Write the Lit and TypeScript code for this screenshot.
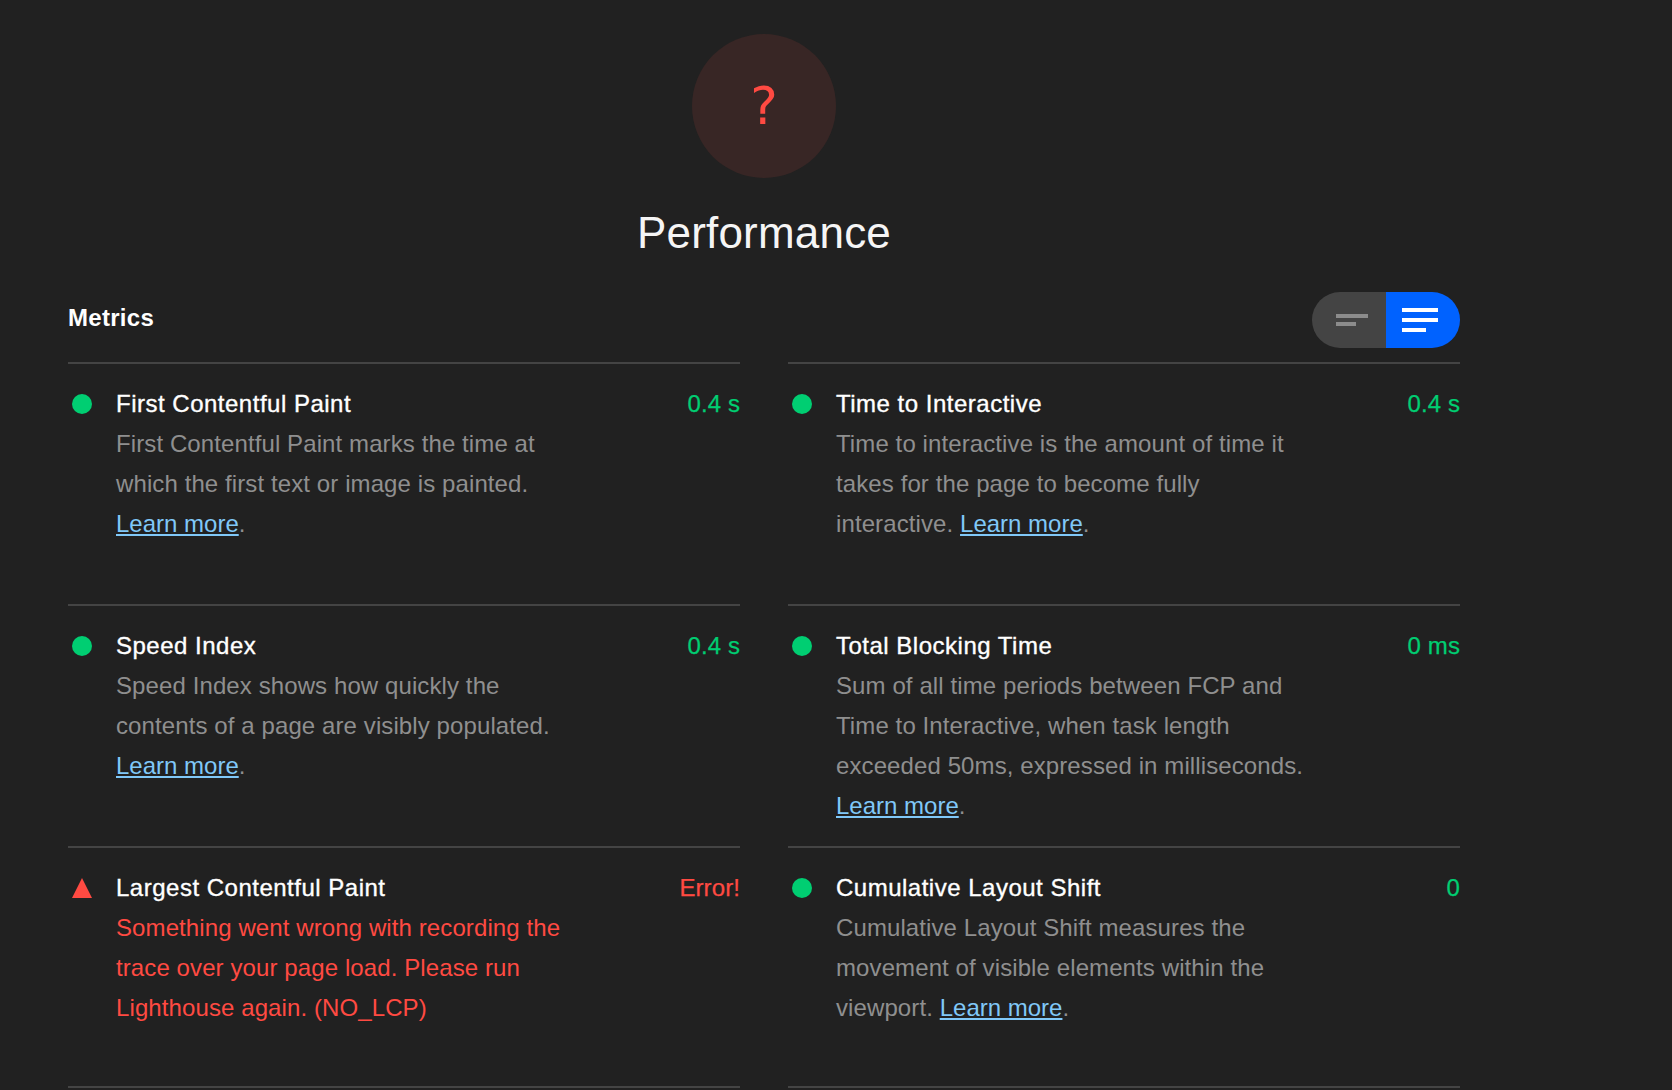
import { html, css, LitElement, nothing } from 'lit';
import { customElement } from 'lit/decorators.js';

type Metric = {
    title: string;
    value: string;
    text: string;
    link?: boolean;
    error?: boolean;
};

const metrics: Metric[] = [
    { title: 'First Contentful Paint', value: '0.4 s', text: 'First Contentful Paint marks the time at which the first text or image is painted. ', link: true },
    { title: 'Time to Interactive', value: '0.4 s', text: 'Time to interactive is the amount of time it takes for the page to become fully interactive. ', link: true },
    { title: 'Speed Index', value: '0.4 s', text: 'Speed Index shows how quickly the contents of a page are visibly populated. ', link: true },
    { title: 'Total Blocking Time', value: '0 ms', text: 'Sum of all time periods between FCP and Time to Interactive, when task length exceeded 50ms, expressed in milliseconds. ', link: true },
    { title: 'Largest Contentful Paint', value: 'Error!', text: 'Something went wrong with recording the trace over your page load. Please run Lighthouse again. (NO_LCP)', error: true },
    { title: 'Cumulative Layout Shift', value: '0', text: 'Cumulative Layout Shift measures the movement of visible elements within the viewport. ', link: true },
];

@customElement('app-root')
export class AppRoot extends LitElement {
    static styles = css`
        :host {
            display: block;
            height: 1090px;
            overflow: hidden;
            background: #212121;
            font-family: 'Liberation Sans', Arial, sans-serif;
            font-size: 24px;
            line-height: 40px;
            color: #fff;
        }
        .page {
            width: 1392px;
            padding: 34px 0 0 68px;
        }
        .gauge {
            display: flex;
            flex-direction: column;
            align-items: center;
        }
        .circle {
            width: 144px;
            height: 144px;
            border-radius: 50%;
            background: #382625;
            color: #ff4a42;
            display: flex;
            align-items: center;
            justify-content: center;
            font-family: 'DejaVu Sans', sans-serif;
            font-size: 52px;
            line-height: 1;
        }
        .label {
            margin-top: 27px;
            font-size: 44px;
            line-height: 56px;
            letter-spacing: 0.2px;
            color: #f5f5f5;
        }
        .header {
            margin-top: 31px;
            height: 70px;
            display: flex;
            justify-content: space-between;
            align-items: flex-start;
        }
        .heading {
            font-weight: bold;
            line-height: 52px;
            letter-spacing: 0.3px;
        }
        .toggle {
            display: flex;
            height: 56px;
            width: 148px;
            border-radius: 28px;
            overflow: hidden;
        }
        .toggle .off {
            width: 74px;
            background: #444;
            display: flex;
            flex-direction: column;
            gap: 4px;
            padding: 22px 0 0 24px;
            box-sizing: border-box;
        }
        .toggle .on {
            width: 74px;
            background: #0062ff;
            display: flex;
            flex-direction: column;
            gap: 6px;
            padding: 16px 0 0 16px;
            box-sizing: border-box;
        }
        .toggle span {
            display: block;
            height: 4px;
        }
        .off span {
            background: #8c8c8c;
            width: 32px;
        }
        .off span.short {
            width: 20px;
        }
        .on span {
            background: #fff;
            width: 36px;
        }
        .on span.short {
            width: 24px;
        }
        .grid {
            display: grid;
            grid-template-columns: 672px 672px;
            grid-template-rows: 242px 242px 240px 40px;
            column-gap: 48px;
        }
        .metric {
            border-top: 2px solid #444;
            padding-top: 20px;
            display: flex;
            box-sizing: border-box;
        }
        .icon {
            flex: none;
            width: 20px;
            height: 20px;
            margin: 10px 24px 0 4px;
        }
        .dot {
            border-radius: 50%;
            background: #00ce72;
        }
        .tri {
            display: block;
            fill: #ff4a42;
        }
        .body {
            flex: 1;
        }
        .top {
            display: flex;
            justify-content: space-between;
        }
        .title {
            letter-spacing: 0.5px;
            -webkit-text-stroke: 0.35px #fff;
        }
        .value {
            color: #00ce72;
            letter-spacing: 0.1px;
            -webkit-text-stroke: 0.25px currentColor;
        }
        .text {
            max-width: 470px;
            color: #8f8f8f;
            letter-spacing: 0.1px;
        }
        .error .value,
        .error .text {
            color: #ff4a42;
        }
        a {
            color: #80c8f8;
            letter-spacing: 0;
        }
    `;

    renderMetric(m: Metric) {
        return html`
            <div class="metric ${m.error ? 'error' : ''}">
                ${m.error
                    ? html`<svg class="icon tri" viewBox="0 0 20 20"><path d="M10 0 L20 20 L0 20 Z"></path></svg>`
                    : html`<div class="icon dot"></div>`}
                <div class="body">
                    <div class="top">
                        <span class="title">${m.title}</span>
                        <span class="value">${m.value}</span>
                    </div>
                    <div class="text">${m.text}${m.link ? html`<a href="#">Learn more</a>.` : nothing}</div>
                </div>
            </div>
        `;
    }

    render() {
        return html`
            <div class="page">
                <div class="gauge">
                    <div class="circle">?</div>
                    <div class="label">Performance</div>
                </div>
                <div class="header">
                    <div class="heading">Metrics</div>
                    <div class="toggle">
                        <div class="off"><span></span><span class="short"></span></div>
                        <div class="on"><span></span><span></span><span class="short"></span></div>
                    </div>
                </div>
                <div class="grid">
                    ${metrics.map((m) => this.renderMetric(m))}
                    <div class="metric"></div>
                    <div class="metric"></div>
                </div>
            </div>
        `;
    }
}
